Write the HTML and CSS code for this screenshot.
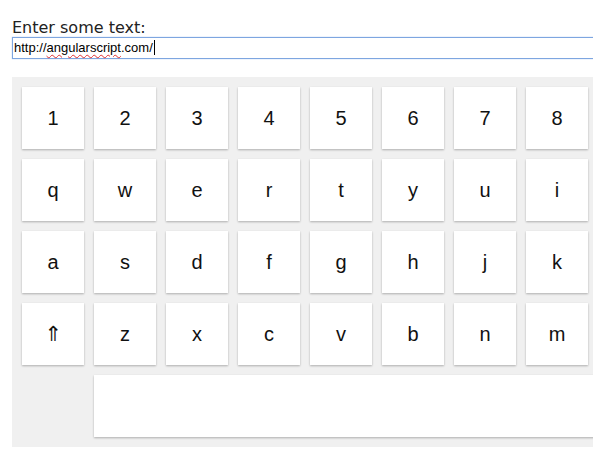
FILE: index.html
```html
<!DOCTYPE html>
<html>
<head>
<meta charset="utf-8">
<link rel="stylesheet" href="styles.css">
</head>
<body>
<div class="page">
  <div class="label">Enter some text:</div>
  <div class="input"><span>http://</span><span class="misspelled">angularscript</span><span>.com/</span><span class="caret"></span></div>
  <div class="keyboard">
    <div class="row">
      <div class="key">1</div><div class="key">2</div><div class="key">3</div><div class="key">4</div><div class="key">5</div><div class="key">6</div><div class="key">7</div><div class="key">8</div>
    </div>
    <div class="row">
      <div class="key">q</div><div class="key">w</div><div class="key">e</div><div class="key">r</div><div class="key">t</div><div class="key">y</div><div class="key">u</div><div class="key">i</div>
    </div>
    <div class="row">
      <div class="key">a</div><div class="key">s</div><div class="key">d</div><div class="key">f</div><div class="key">g</div><div class="key">h</div><div class="key">j</div><div class="key">k</div>
    </div>
    <div class="row">
      <div class="key shift">&#8657;</div><div class="key">z</div><div class="key">x</div><div class="key">c</div><div class="key">v</div><div class="key">b</div><div class="key">n</div><div class="key">m</div>
    </div>
    <div class="row space-row">
      <div class="key space"></div>
    </div>
  </div>
</div>
</body>
</html>
```
FILE: styles.css
```css
html, body {
  margin: 0;
  padding: 0;
  background: #fff;
  overflow: hidden;
}
.page {
  padding: 18px 0 0 12px;
  width: 900px;
}
.label {
  font-family: "DejaVu Sans", sans-serif;
  font-size: 16px;
  line-height: 19px;
  color: #222;
  height: 19px;
}
.input {
  box-sizing: border-box;
  width: 700px;
  height: 22px;
  border: 1px solid #7ea6e0;
  box-shadow: 0 0 1px #9cbef0;
  font-family: "Liberation Sans", Arial, sans-serif;
  font-size: 13px;
  line-height: 19px;
  padding-left: 1px;
  color: #000;
  white-space: nowrap;
}
.misspelled {
  text-decoration: underline wavy #e03030;
  text-decoration-thickness: 1px;
  text-underline-offset: 2px;
}
.caret {
  display: inline-block;
  width: 1px;
  height: 15px;
  background: #000;
  vertical-align: -3px;
  margin-left: 1px;
}
.keyboard {
  margin-top: 18px;
  background: #f0f0f0;
  padding: 10px;
  width: 800px;
  display: flex;
  flex-direction: column;
  gap: 10px;
}
.row {
  display: flex;
  gap: 10px;
}
.key {
  flex: none;
  width: 62px;
  height: 62px;
  background: #fff;
  box-shadow: 0 1px 2px rgba(0,0,0,0.28);
  display: flex;
  align-items: center;
  justify-content: center;
  font-family: "Liberation Sans", Arial, sans-serif;
  font-size: 20px;
  color: #111;
}
.shift {
  font-family: "DejaVu Sans", sans-serif;
  font-size: 21px;
}
.space-row {
  padding-left: 72px;
}
.space {
  width: 600px;
}
```
